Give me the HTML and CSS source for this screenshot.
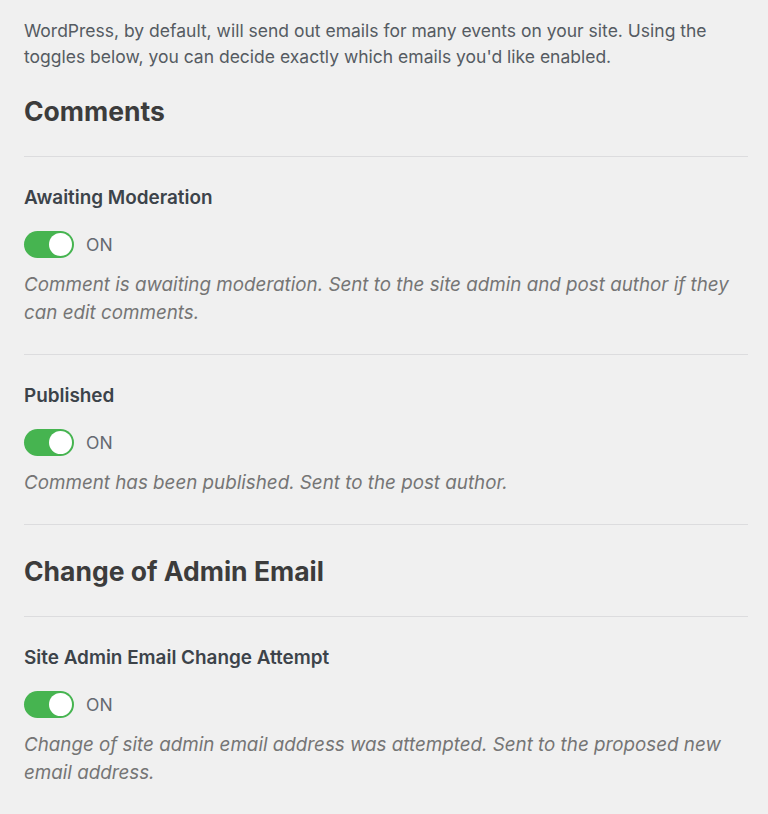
FILE: index.html
```html
<!DOCTYPE html>
<html>
<head>
<meta charset="utf-8">
<link rel="stylesheet" href="styles.css">
</head>
<body>
<div class="page">
  <p class="intro">WordPress, by default, will send out emails for many events on your site. Using the toggles below, you can decide exactly which emails you'd like enabled.</p>

  <h2 class="section-title">Comments</h2>
  <div class="item">
    <h3 class="item-title">Awaiting Moderation</h3>
    <div class="toggle-row"><span class="toggle"><span class="knob"></span></span><span class="toggle-label">ON</span></div>
    <p class="desc">Comment is awaiting moderation. Sent to the site admin and post author if they can edit comments.</p>
  </div>
  <div class="item">
    <h3 class="item-title">Published</h3>
    <div class="toggle-row"><span class="toggle"><span class="knob"></span></span><span class="toggle-label">ON</span></div>
    <p class="desc">Comment has been published. Sent to the post author.</p>
  </div>

  <h2 class="section-title">Change of Admin Email</h2>
  <div class="item">
    <h3 class="item-title">Site Admin Email Change Attempt</h3>
    <div class="toggle-row"><span class="toggle"><span class="knob"></span></span><span class="toggle-label">ON</span></div>
    <p class="desc">Change of site admin email address was attempted. Sent to the proposed new email address.</p>
  </div>
</div>
</body>
</html>
```

FILE: styles.css
```css
html, body {
  margin: 0;
  padding: 0;
  background: #f0f0f0;
}
body {
  font-family: Inter, "Liberation Sans", sans-serif;
  color: #50575e;
}
.page {
  padding: 18px 20px 0 24px;
}
.intro {
  margin: 0;
  font-size: 17.5px;
  line-height: 26px;
  color: #555b62;
}
.section-title {
  margin: 0;
  padding: 25px 0 29px;
  font-size: 26.5px;
  line-height: 32px;
  font-weight: 700;
  color: #3c3c3c;
  border-bottom: 1px solid #dcdcde;
}
.item + .section-title {
  padding-top: 30px;
}
.item {
  padding: 29px 0 27px;
  border-bottom: 1px solid #dcdcde;
}
.item:last-child {
  border-bottom: none;
}
.item-title {
  margin: 0;
  font-size: 18.9px;
  line-height: 24px;
  font-weight: 600;
  color: #3c434a;
}
.toggle-row {
  display: flex;
  align-items: center;
  gap: 12px;
  margin-top: 21px;
}
.toggle {
  display: inline-flex;
  justify-content: flex-end;
  align-items: center;
  box-sizing: border-box;
  width: 50px;
  height: 27px;
  padding: 2px;
  border-radius: 14px;
  background: #46b450;
}
.knob {
  width: 23px;
  height: 23px;
  border-radius: 50%;
  background: #fff;
}
.toggle-label {
  font-size: 17.5px;
  color: #646970;
}
.desc {
  margin: 13px 0 0;
  font-size: 18.8px;
  line-height: 28px;
  font-style: italic;
  color: #757575;
}
```
